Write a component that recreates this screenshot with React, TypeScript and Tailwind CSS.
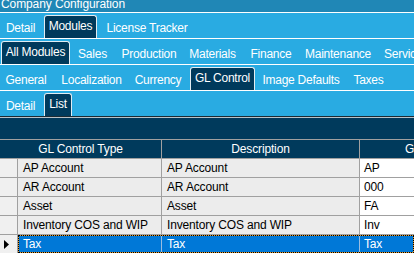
import React from 'react'

type Tab = { label: string; cls: string; active?: boolean }

const font = "font-['Liberation_Sans',Arial,sans-serif]"

const rows: Tab[][] = [
  [
    { label: 'Detail', cls: 'ml-[1px] w-[39px]' },
    { label: 'Modules', cls: 'ml-[4px] w-[53px]', active: true },
    { label: 'License Tracker', cls: 'ml-[4px] w-[92px]' },
  ],
  [
    { label: 'All Modules', cls: 'ml-[1px] w-[69px]', active: true },
    { label: 'Sales', cls: 'ml-[4px] w-[37px]' },
    { label: 'Production', cls: 'ml-[4px] w-[68px]' },
    { label: 'Materials', cls: 'ml-[4px] w-[51px]' },
    { label: 'Finance', cls: 'ml-[4px] w-[58px]' },
    { label: 'Maintenance', cls: 'ml-[4px] w-[68px]' },
    { label: 'Service', cls: 'ml-[4px] w-[60px] !justify-start pl-[8px]' },
  ],
  [
    { label: 'General', cls: 'ml-[1px] w-[50px]' },
    { label: 'Localization', cls: 'ml-[4px] w-[73px]' },
    { label: 'Currency', cls: 'ml-[4px] w-[52px]' },
    { label: 'GL Control', cls: 'ml-[6px] w-[65px]', active: true },
    { label: 'Image Defaults', cls: 'ml-[4px] w-[84px]' },
    { label: 'Taxes', cls: 'ml-[4px] w-[43px]' },
  ],
  [
    { label: 'Detail', cls: 'ml-[1px] w-[39px]' },
    { label: 'List', cls: 'ml-[4px] w-[28px]', active: true },
  ],
]

const data = [
  ['AP Account', 'AP Account', 'AP'],
  ['AR Account', 'AR Account', '000'],
  ['Asset', 'Asset', 'FA'],
  ['Inventory COS and WIP', 'Inventory COS and WIP', 'Inv'],
]

function TabRow({ tabs }: { tabs: Tab[] }) {
  return (
    <div className={`flex h-[25px] overflow-hidden whitespace-nowrap bg-[#29abe2] text-[12px] tracking-[-0.25px] text-white ${font}`}>
      {tabs.map(t =>
        t.active ? (
          <div
            key={t.label}
            className={`${t.cls} mt-[2px] flex shrink-0 items-center justify-center rounded-t-[3px] border border-b-0 border-[#e2ecf2] bg-[#003a5c] pb-[3px]`}
          >
            {t.label}
          </div>
        ) : (
          <div key={t.label} className={`${t.cls} flex shrink-0 items-center justify-center pt-[4px]`}>
            {t.label}
          </div>
        )
      )}
    </div>
  )
}

export default function App() {
  return (
    <div className={`w-[414px] h-[255px] overflow-hidden bg-white ${font}`}>
      <div className="h-[12px] overflow-hidden bg-[#2087b6] text-[12px] leading-[12px] text-white">
        <span className="-mt-[2px] block pl-[1px] tracking-[-0.1px]">Company Configuration</span>
      </div>
      {rows.map((r, i) => (
        <div key={i}>
          <div className="h-px bg-white" />
          <TabRow tabs={r} />
        </div>
      ))}
      <div className="h-px bg-[#1c2a33]" />
      <div className="h-px bg-[#b9c2c8]" />
      <div className="h-[21px] bg-[#003a5c]" />

      <div className="text-[12px] tracking-[-0.15px]">
        <div className="flex h-[20px] border-y border-[#a0a0a0] bg-[#003a5c] leading-[18px] text-white whitespace-nowrap">
          <div className="w-[162px] shrink-0 border-r border-[#a0a0a0] text-center">GL Control Type</div>
          <div className="w-[198px] shrink-0 border-r border-[#a0a0a0] text-center">Description</div>
          <div className="w-[150px] shrink-0 text-center">GL Account</div>
        </div>

        {data.map(d => (
          <div key={d[0]} className="flex h-[19px] border-b border-[#a0a0a0] leading-[18px] text-black whitespace-nowrap">
            <div className="w-[18px] shrink-0 border-r border-[#a0a0a0] bg-[#f0f0f0]" />
            <div className="w-[144px] shrink-0 border-r border-[#a0a0a0] bg-[#ececec] pl-[5px]">{d[0]}</div>
            <div className="w-[198px] shrink-0 border-r border-[#a0a0a0] bg-[#ececec] pl-[5px]">{d[1]}</div>
            <div className="flex-1 bg-white pl-[4px]">{d[2]}</div>
          </div>
        ))}

        <div className="flex h-[18px] leading-[16px] whitespace-nowrap">
          <div className="flex w-[18px] shrink-0 items-center border-r border-[#a0a0a0] bg-[#f0f0f0] pl-[4px]">
            <svg width="6" height="9" viewBox="0 0 6 9">
              <polygon points="0,0 5,4.5 0,9" fill="#000" />
            </svg>
          </div>
          <div className="flex flex-1 border border-dotted border-black bg-[#e39a2e] text-white">
            <div className="w-[143px] shrink-0 border-r border-[#9bbde0] bg-[#0078d7] pl-[4px]">Tax</div>
            <div className="w-[198px] shrink-0 border-r border-[#9bbde0] bg-[#0078d7] pl-[5px]">Tax</div>
            <div className="flex-1 bg-[#0078d7] pl-[4px]">Tax</div>
          </div>
        </div>
      </div>
    </div>
  )
}
